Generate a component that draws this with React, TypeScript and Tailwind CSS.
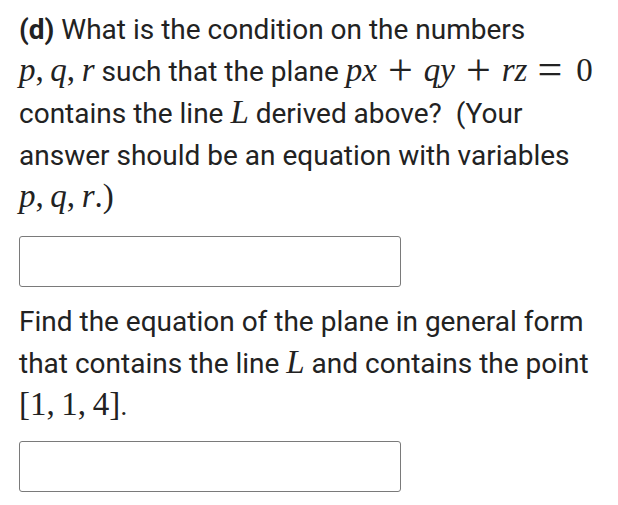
import React from 'react';

function M({ children }: { children: React.ReactNode }) {
  return (
    <span className="font-['Liberation_Serif',serif] italic text-[33px] leading-none">{children}</span>
  );
}

function N({ children }: { children: React.ReactNode }) {
  return <span className="font-['Liberation_Serif',serif] text-[33px] leading-none">{children}</span>;
}

// binary operator, sized up to match the wider KaTeX glyph
function Op({ children }: { children: React.ReactNode }) {
  return (
    <span className="font-['Liberation_Serif',serif] text-[44px] leading-[0] align-[-4px] mx-[11px]">{children}</span>
  );
}

function Rel({ children }: { children: React.ReactNode }) {
  return (
    <span className="font-['Liberation_Serif',serif] text-[44px] leading-[0] align-[-3px] ml-[10px] mr-[14px]">{children}</span>
  );
}

function Line({ children }: { children: React.ReactNode }) {
  return <div className="h-[42px] leading-[42px] whitespace-nowrap">{children}</div>;
}

function AnswerBox() {
  return (
    <input
      type="text"
      className="block w-[382px] h-[51px] rounded-[3px] border border-[#7a7a7a] bg-white outline-none"
    />
  );
}

export default function App() {
  return (
    <div className="min-h-[505px] w-[618px] bg-white pl-[19px] pt-[9px] text-[28px] text-[#222] font-['Roboto','Liberation_Sans',sans-serif]">
      {/* part (d) */}
      <Line>
        <b className="font-bold">(d)</b> What is the condition on the numbers
      </Line>
      <Line>
        <M>p</M><N>,&thinsp;</N><M>q</M><N>,&thinsp;</N><M>r</M> such that the plane <M>px</M><Op>+</Op><M>qy</M><Op>+</Op><M>rz</M><Rel>=</Rel><N>0</N>
      </Line>
      <Line>
        contains the line <M>L</M> derived above? &nbsp;(Your
      </Line>
      <Line>answer should be an equation with variables</Line>
      <Line>
        <M>p</M><N>,&thinsp;</N><M>q</M><N>,&thinsp;</N><M>r</M><N>.)</N>
      </Line>
      <div className="mt-[17px]">
        <AnswerBox />
      </div>

      <div className="mt-[14px]">
        <Line>Find the equation of the plane in general form</Line>
        <Line>
          that contains the line <M>L</M> and contains the point
        </Line>
        <Line>
          <N>[1,&thinsp;1,&thinsp;4]</N>.
        </Line>
      </div>
      <div className="mt-[14px]">
        <AnswerBox />
      </div>
    </div>
  );
}
